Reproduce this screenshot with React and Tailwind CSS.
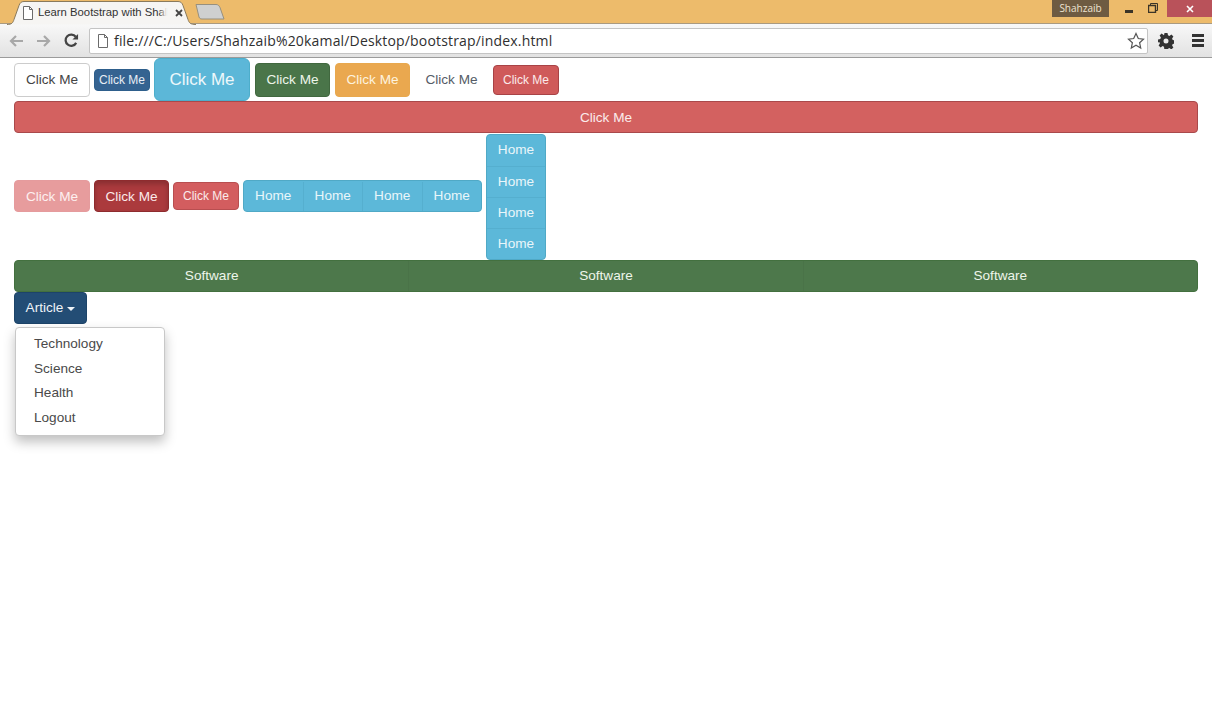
import React from 'react';

const btn = 'flex items-center justify-center rounded-[4px] border leading-none shrink-0';

const FileIcon = ({ className }) => (
  <svg className={className} viewBox="0 0 12 14" fill="none" stroke="#6b6b6b" strokeWidth="1">
    <path d="M1.5 0.5h6l3 3v10h-9z" fill="#fff" />
    <path d="M7.5 0.5v3h3" />
  </svg>
);

const TitleBar = () => (
  <div className="relative flex h-[24px] items-end bg-[#edbb6b] border-b border-[#a99a80]">
    <div className="relative ml-[7px] flex h-[23px] w-[190px] items-center pl-[15px] mb-[-1px]">
      <svg className="absolute inset-0 h-[24px] w-[190px]" viewBox="0 0 190 24" fill="none">
        <path d="M0 23.5c5 0 6-2 7-5l5-14c1-2.500 2-4 5-4h154c3 0 4 1.500 5 4l5 14c1 3 2 5 8 5" fill="#f6f5f3" stroke="#8a7a5c" />
      </svg>
      <FileIcon className="relative h-[14px] w-[12px]" />
      <div className="relative ml-[4px] w-[129px] whitespace-nowrap text-[11.3px] text-[#333] font-['Liberation_Sans',sans-serif]">
        Learn Bootstrap with Shal
        <div className="absolute inset-y-0 right-0 w-[8px] bg-gradient-to-r from-transparent to-[#f6f5f3]"></div>
      </div>
      <svg className="relative ml-[8px] h-[8px] w-[8px]" viewBox="0 0 8 8" stroke="#444" strokeWidth="1.800">
        <path d="M1 1l6 6M7 1l-6 6" />
      </svg>
    </div>
    <svg className="ml-[-2px] mb-[3px] h-[16px] w-[30px]" viewBox="0 0 30 16" fill="none">
      <path d="M1 0.500h20c2 0 3 1 4 3l4 11.500h-22c-1.500 0-2.500-.5-3-2z" fill="#cfd0d0" stroke="#97907f" />
    </svg>
    <div className="absolute right-[103px] top-0 flex h-[17px] w-[57px] items-center justify-center bg-[#6e5b42] text-[10px] text-[#eee4d2] font-['Open_Sans',sans-serif]">Shahzaib</div>
    <div className="absolute right-[79px] top-[10px] h-[3px] w-[8px] bg-[#3b3427]"></div>
    <svg className="absolute right-[54px] top-[3px] h-[10px] w-[10px]" viewBox="0 0 10 10" fill="none" stroke="#3b3427">
      <path d="M2.500 2.500v-2h7v7h-2" />
      <path d="M0.500 2.500h7v7h-7z" strokeWidth="1.400" />
    </svg>
    <div className="absolute right-0 top-0 flex h-[17px] w-[45px] items-center justify-center bg-[#b9525a]">
      <svg className="h-[8px] w-[8px]" viewBox="0 0 8 8" stroke="#fff" strokeWidth="1.600">
        <path d="M1 1l6 6M7 1l-6 6" />
      </svg>
    </div>
  </div>
);

const Toolbar = () => (
  <div className="flex h-[34px] items-center bg-gradient-to-b from-[#f8f8f8] to-[#e2e2e2] border-b border-[#9b9b9b]">
    <svg className="ml-[9px] h-[14px] w-[15px]" viewBox="0 0 15 14" fill="none" stroke="#a8a8a8" strokeWidth="2.200">
      <path d="M14 7H2M7 2L2 7l5 5" />
    </svg>
    <svg className="ml-[12px] h-[14px] w-[15px]" viewBox="0 0 15 14" fill="none" stroke="#a8a8a8" strokeWidth="2.200">
      <path d="M1 7h12M8 2l5 5-5 5" />
    </svg>
    <svg className="ml-[13px] h-[15px] w-[15px]" viewBox="0 0 16 16" fill="none">
      <path d="M13 10.500A6 6 0 1 1 12.500 4" stroke="#444" strokeWidth="2.400" />
      <path d="M15 1v6H9z" fill="#444" />
    </svg>
    <div className="ml-[10px] flex h-[26px] w-[1059px] items-center rounded-[2px] border border-[#c4c4c4] bg-white pl-[7px]">
      <FileIcon className="h-[14px] w-[12px]" />
      <span className="ml-[5px] text-[14px] text-[#2f2f2f] font-['Open_Sans',sans-serif] tracking-[0.17px]">file:///C:/Users/Shahzaib%20kamal/Desktop/bootstrap/index.html</span>
      <svg className="ml-auto mr-[2px] h-[18px] w-[18px]" viewBox="0 0 18 18" fill="#fff" stroke="#555" strokeWidth="1.200">
        <path d="M9 1.500l2.300 5 5.200.6-3.900 3.600 1.100 5.300L9 13.300 4.300 16l1.100-5.300L1.500 7.100l5.200-.6z" />
      </svg>
    </div>
    <svg className="ml-[10px] h-[16px] w-[16px]" viewBox="0 0 16 16" fill="#333">
      <path fillRule="evenodd" d="M6.500 0h3l.5 2.300 1.400.6 2-1.300 2 2-1.300 2 .6 1.400 2.300.5v3l-2.300.5-.6 1.400 1.300 2-2 2-2-1.300-1.400.6-.5 2.300h-3L6 13.700l-1.400-.6-2 1.300-2-2 1.300-2-.6-1.400L0 9.500v-3l2.300-.5.6-1.400-1.300-2 2-2 2 1.300L6 2.300zM8 5.500a2.500 2.500 0 1 0 0 5 2.500 2.500 0 0 0 0-5z" />
    </svg>
    <div className="ml-[18px] flex w-[12px] flex-col gap-[2px]">
      <div className="h-[3px] bg-[#333]"></div>
      <div className="h-[3px] bg-[#333]"></div>
      <div className="h-[3px] bg-[#333]"></div>
    </div>
  </div>
);

const Dropdown = () => (
  <div className="absolute left-[1px] top-[35px] flex h-[109px] w-[150px] flex-col rounded-[4px] border border-[#c8c8c8] bg-white pl-[18px] pt-[4px] text-[13.6px] text-[#4a4a4a] shadow-[0_6px_12px_rgba(0,0,0,0.25)]">
    <div className="flex h-[24.600px] items-center">Technology</div>
    <div className="flex h-[24.600px] items-center">Science</div>
    <div className="flex h-[24.600px] items-center">Health</div>
    <div className="flex h-[24.600px] items-center">Logout</div>
  </div>
);

const App = () => {
  return (
    <div className="flex h-[720px] w-[1212px] flex-col overflow-hidden bg-white font-['Liberation_Sans',sans-serif] text-[13.6px]">
      <TitleBar />
      <Toolbar />
      <div className="flex flex-col px-[14px]">
        <div className="flex h-[43px] items-center gap-[4px]">
          <div className={`${btn} h-[34px] w-[76px] border-[#cccccc] bg-white text-[#444]`}>Click Me</div>
          <div className={`${btn} h-[22px] w-[56px] rounded-[3px] border-[#2e5f8c] bg-[#356391] text-[12px] font-medium text-[#e8eef5]`}>Click Me</div>
          <div className={`${btn} h-[43px] w-[96px] rounded-[6px] border-[#4daecb] bg-[#5cb7d8] text-[17px] text-[#eef8fb]`}>Click Me</div>
          <div className={`${btn} ml-px h-[34px] w-[75px] border-[#41683f] bg-[#4a7549] text-[#eef5ea]`}>Click Me</div>
          <div className={`${btn} ml-px h-[34px] w-[75px] border-[#e8a84e] bg-[#eaa84f] text-[#fdf3df]`}>Click Me</div>
          <div className={`${btn} h-[34px] w-[75px] border-transparent bg-white text-[#555c66]`}>Click Me</div>
          <div className={`${btn} h-[30px] w-[66px] rounded-[3px] border-[#a84346] bg-[#cf5a5a] text-[12px] text-[#fbeaea]`}>Click Me</div>
        </div>
        <div className={`${btn} h-[32px] w-[1184px] border-[#a9494b] bg-[#d36160] pt-px text-[#fbecec]`}>Click Me</div>
        <div className="flex h-[127px] items-center gap-[4px] pb-px">
          <div className={`${btn} h-[32px] w-[76px] border-[#e59b9d] bg-[#e79c9d] pt-px text-[#fdf0f0]`}>Click Me</div>
          <div className={`${btn} h-[32px] w-[75px] border-[#8e2b2e] bg-[#ab3a3d] pt-px text-[#fbeaea] shadow-[inset_0_3px_5px_rgba(0,0,0,0.2)]`}>Click Me</div>
          <div className={`${btn} h-[28px] w-[66px] rounded-[3px] border-[#b84e50] bg-[#d35d5f] text-[12px] text-[#fbeaea]`}>Click Me</div>
          <div className="flex h-[32px] w-[239px] rounded-[4px] border border-[#50a9c6] bg-[#5cb8d9] pt-px text-[#e9f6fa]">
            <div className="flex flex-1 items-center justify-center">Home</div>
            <div className="flex flex-1 items-center justify-center border-l border-[#55afcf]">Home</div>
            <div className="flex flex-1 items-center justify-center border-l border-[#55afcf]">Home</div>
            <div className="flex flex-1 items-center justify-center border-l border-[#55afcf]">Home</div>
          </div>
          <div className="mb-[-1px] flex h-[126px] w-[60px] flex-col self-end rounded-[4px] border border-[#50a9c6] bg-[#5cb8d9] text-[#e9f6fa]">
            <div className="flex h-[31px] items-center justify-center">Home</div>
            <div className="flex h-[31px] items-center justify-center border-t border-[#55afcf] pt-px">Home</div>
            <div className="flex h-[31px] items-center justify-center border-t border-[#55afcf] pt-px">Home</div>
            <div className="flex flex-1 items-center justify-center border-t border-[#55afcf]">Home</div>
          </div>
        </div>
        <div className="flex h-[32px] w-[1184px] rounded-[4px] border border-[#43703f] bg-[#4d784b] text-[#eef5ea]">
          <div className="flex flex-1 items-center justify-center">Software</div>
          <div className="flex flex-1 items-center justify-center border-l border-[#4a7348]">Software</div>
          <div className="flex flex-1 items-center justify-center border-l border-[#4a7348]">Software</div>
        </div>
        <div className="relative">
          <div className={`${btn} h-[32px] w-[73px] gap-[4px] border-[#1d4469] bg-[#234d75] text-[#eef3f8]`}>
            Article
            <span className="mt-[2px] h-0 w-0 border-x-[4px] border-t-[4px] border-x-transparent border-t-[#eef3f8]"></span>
          </div>
          <Dropdown />
        </div>
      </div>
    </div>
  );
};

export default App;
